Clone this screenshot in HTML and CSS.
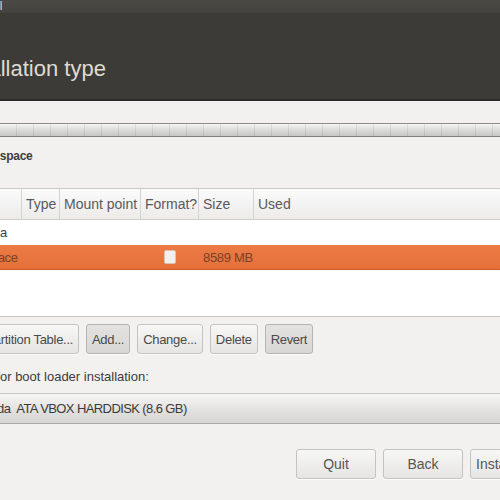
FILE: index.html
```html
<!DOCTYPE html>
<html lang="en">
<head>
  <meta charset="UTF-8" />
  <title>Install</title>
  <link rel="stylesheet" href="styles.css">
</head>
<body>

  <div class="titlebar"><span class="wintitle">Install</span></div>
  <div class="header">
    <h1><span class="cut-title">Installation type</span></h1>
  </div>

  <div class="content">
    <div class="diskbar"></div>

    <div class="legend"><span class="cut-legend">free space</span></div>

    <div class="table">
      <div class="row head">
        <div class="cell"></div>
        <div class="cell">Type</div>
        <div class="cell">Mount point</div>
        <div class="cell">Format?</div>
        <div class="cell">Size</div>
        <div class="cell">Used</div>
      </div>
      <div class="row">
        <div class="cell"><span class="cut-dev">/dev/sda</span></div>
      </div>
      <div class="row selected">
        <div class="cell"><span class="cut-free">free space</span></div>
        <div class="cell"></div>
        <div class="cell"></div>
        <div class="cell center"><span class="check"></span></div>
        <div class="cell">8589 MB</div>
        <div class="cell"></div>
      </div>
    </div>

    <div class="actions">
      <button class="btn first">New Partition Table...</button>
      <button class="btn pressed">Add...</button>
      <button class="btn">Change...</button>
      <button class="btn">Delete</button>
      <button class="btn pressed">Revert</button>
    </div>

    <div class="boot-label"><span class="cut-boot">Device for boot loader installation:</span></div>

    <div class="combo"><span class="cut-combo">/dev/sda&nbsp;&nbsp;ATA VBOX HARDDISK (8.6 GB)</span></div>

    <div class="nav">
      <button class="btn nav-btn">Quit</button>
      <button class="btn nav-btn">Back</button>
      <button class="btn nav-btn">Install Now</button>
    </div>
  </div>

</body>
</html>
```

FILE: styles.css
```css
body {
  margin: 0;
  width: 500px;
  height: 500px;
  overflow: hidden;
  background: #f2f1f0;
  font-family: 'Liberation Sans', Arial, sans-serif;
  font-size: 14px;
  color: #3c3c3c;
}

.titlebar {
  height: 13px;
  background: linear-gradient(#4a4944, #43423e);
  color: #dfdbd2;
  font-size: 12px;
  line-height: 13px;
  white-space: nowrap;
  overflow: hidden;
}

.wintitle { margin-left: -29px; }

.header {
  height: 86px;
  background: #3c3b37;
  border-bottom: 2px solid #2a2926;
  overflow: hidden;
}

.header h1 {
  margin: 0;
  padding-top: 44px;
  font-size: 22px;
  font-weight: normal;
  line-height: 24px;
  color: #dfdbd2;
  white-space: nowrap;
}

.cut-title { margin-left: -47px; }

.content {
  padding-top: 22px;
}

.diskbar {
  height: 12px;
  border-top: 1px solid #8a8a88;
  border-bottom: 1px solid #7e7e7c;
  background:
    repeating-linear-gradient(90deg, transparent 0 16px, rgba(0,0,0,0.08) 16px 17px),
    linear-gradient(#f4f4f3, #dcdcda 50%, #c6c6c4);
}

.legend {
  margin-top: 12px;
  height: 22px;
  font-size: 12px;
  letter-spacing: -0.3px;
  font-weight: bold;
  white-space: nowrap;
}

.cut-legend { margin-left: -24px; }

.table {
  margin-top: 17px;
  height: 127px;
  background: #fff;
  border-top: 1px solid #c9c9c7;
  border-bottom: 1px solid #c9c9c7;
  font-size: 13px;
}

.row {
  display: grid;
  grid-template-columns: 22px 38px 81px 58px 55px 1fr;
  height: 25px;
  align-items: center;
  white-space: nowrap;
}

.row.head {
  height: 30px;
  font-size: 14px;
  background: linear-gradient(#fbfbfb, #ecebea);
  border-bottom: 1px solid #cfcfcd;
  color: #5a5a5a;
}

.row.head .cell {
  height: 30px;
  line-height: 30px;
  border-right: 1px solid #d3d3d1;
  padding-left: 4px;
}

.row.head .cell:first-child { padding-left: 0; }
.row.head .cell:last-child { border-right: none; }

.cell {
  padding-left: 4px;
}

.row .cell:first-child { padding-left: 0; }

.cut-dev { margin-left: -42px; }
.cut-free { margin-left: -40px; }

.row.selected {
  height: 24px;
  background: linear-gradient(#ec7b44, #e5703a);
  border-bottom: 1px solid #c65d2b;
  color: #7a4125;
  letter-spacing: -0.3px;
}

.center {
  display: flex;
  justify-content: center;
  padding-left: 0;
}

.check {
  width: 10px;
  height: 12px;
  background: #f4efec;
  border: 1px solid #d9c2b5;
  border-radius: 2px;
}

.actions {
  display: flex;
  gap: 7px;
  margin-top: 7px;
  white-space: nowrap;
}

.btn {
  height: 30px;
  padding: 0 5px;
  font-family: inherit;
  font-size: 13px;
  letter-spacing: -0.3px;
  color: #4a4a4a;
  background: linear-gradient(#f7f7f6, #e6e5e3);
  border: 1px solid #c4c3c0;
  border-radius: 3px;
  box-shadow: 0 1px 0 rgba(255,255,255,0.8);
}

.btn.first {
  margin-left: -49px;
}

.btn.pressed {
  background: linear-gradient(#e3e2e0, #d8d7d5);
  border-color: #b5b4b1;
}

.boot-label {
  margin-top: 14px;
  height: 18px;
  line-height: 18px;
  font-size: 13px;
  white-space: nowrap;
}

.cut-boot { margin-left: -47px; }

.combo {
  margin-top: 7px;
  height: 29px;
  line-height: 29px;
  font-size: 13px;
  letter-spacing: -0.6px;
  background: linear-gradient(#f6f6f5, #e1e0de 60%, #d6d5d3);
  border-top: 1px solid #c7c6c3;
  border-bottom: 1px solid #a9a8a5;
  white-space: nowrap;
  color: #3a3a3a;
}

.cut-combo { margin-left: -34px; }

.nav {
  display: flex;
  gap: 7px;
  margin-top: 25px;
  padding-left: 296px;
  white-space: nowrap;
}

.nav-btn {
  flex: none;
  width: 80px;
  height: 30px;
  font-size: 14px;
  letter-spacing: 0;
  color: #555;
}
```
